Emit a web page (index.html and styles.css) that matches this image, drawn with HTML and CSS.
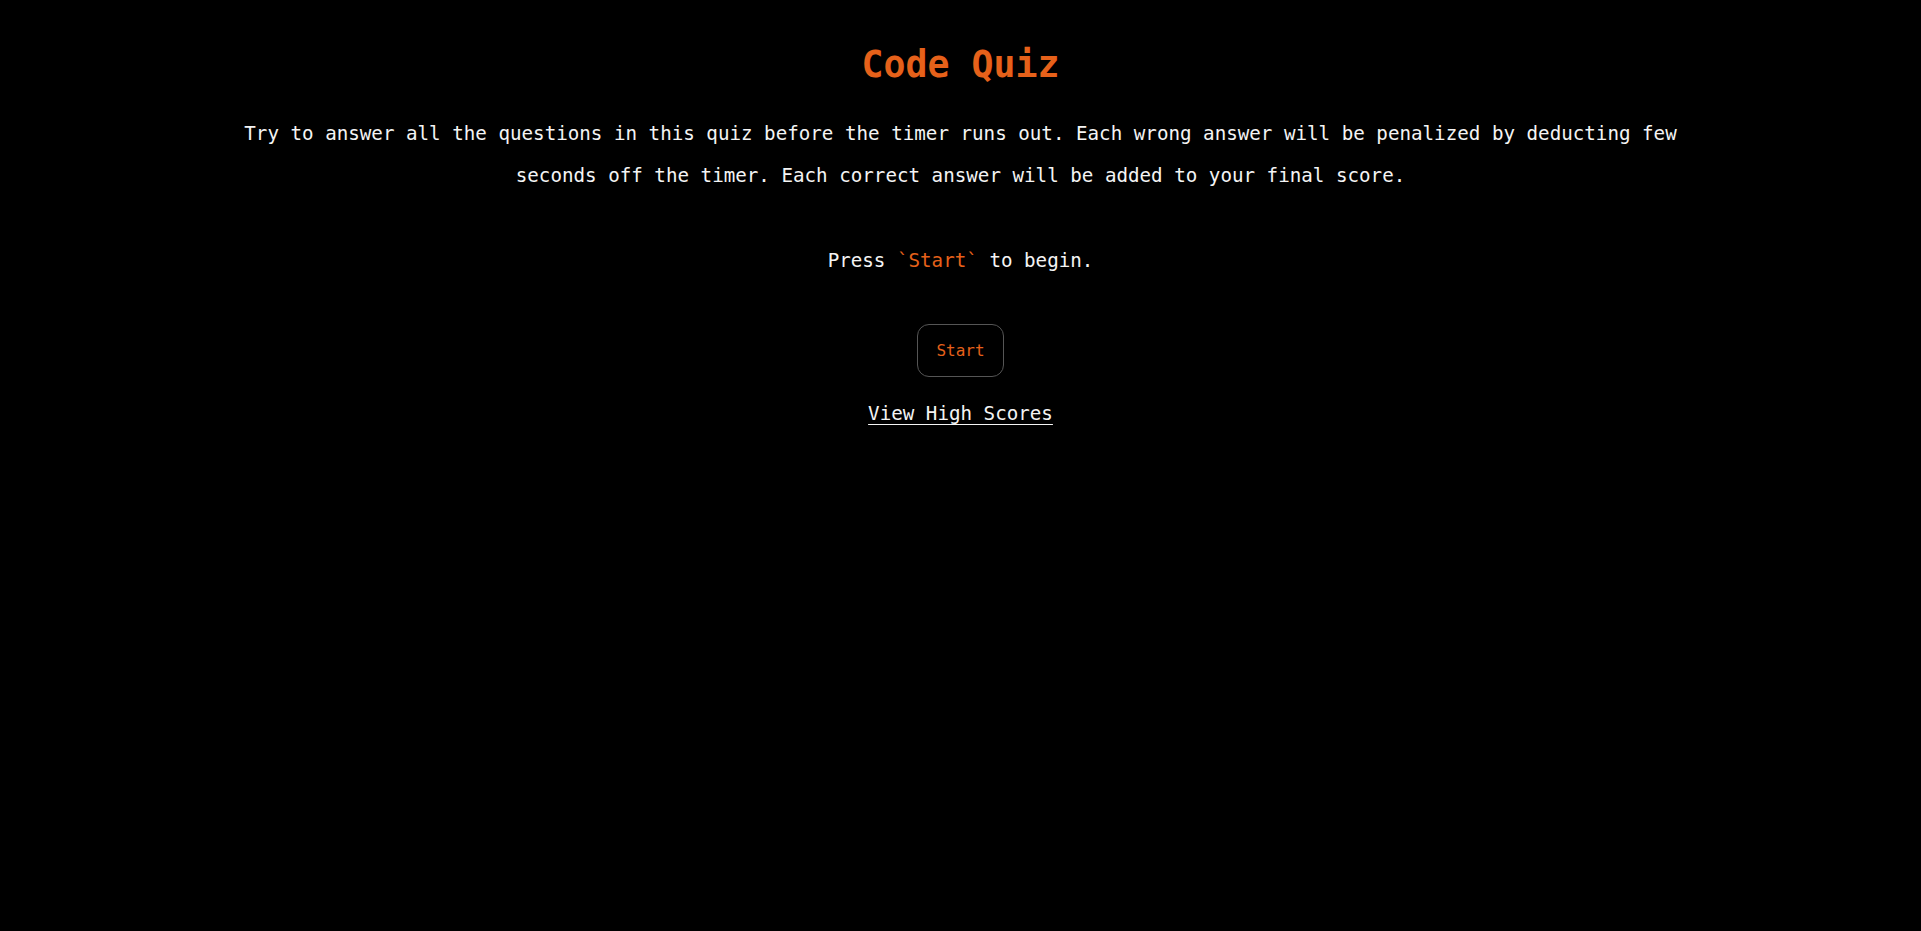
FILE: index.html
```html
<!DOCTYPE html>
<html lang="en">
<head>
<meta charset="utf-8">
<title>Code Quiz</title>
<link rel="stylesheet" href="styles.css">
</head>
<body>
<main class="intro">
  <h1 class="title">Code Quiz</h1>
  <p class="rules">Try to answer all the questions in this quiz before the timer runs out. Each wrong answer will be penalized by deducting few seconds off the timer. Each correct answer will be added to your final score.<br><br>Press <span class="accent">`Start`</span> to begin.</p>
  <button class="start-btn" type="button">Start</button>
  <a class="scores-link" href="#">View High Scores</a>
</main>
</body>
</html>
```

FILE: styles.css
```css
html, body {
  margin: 0;
  padding: 0;
  background: #000;
}

body {
  font-family: "DejaVu Sans Mono", "Liberation Mono", monospace;
  color: #f4f4f4;
}

.intro {
  width: 75%;
  margin: 0 auto;
  display: flex;
  flex-direction: column;
  align-items: center;
  text-align: center;
}

.title {
  margin: 43px 0 0;
  font-size: 36.5px;
  line-height: 44px;
  font-weight: bold;
  color: #e6611a;
}

.rules {
  margin: 26px 0 0;
  font-size: 19.2px;
  line-height: 42.3px;
}

.accent {
  color: #e6611a;
}

.start-btn {
  margin-top: 42px;
  width: 87px;
  height: 53px;
  padding: 0;
  background: #000;
  border: 1px solid #555;
  border-radius: 12px;
  color: #e6611a;
  font-family: inherit;
  font-size: 16px;
}

.scores-link {
  margin-top: 26px;
  font-size: 19.2px;
  line-height: 22px;
  color: #f4f4f4;
  text-decoration: underline;
  text-underline-offset: 4px;
}
```
